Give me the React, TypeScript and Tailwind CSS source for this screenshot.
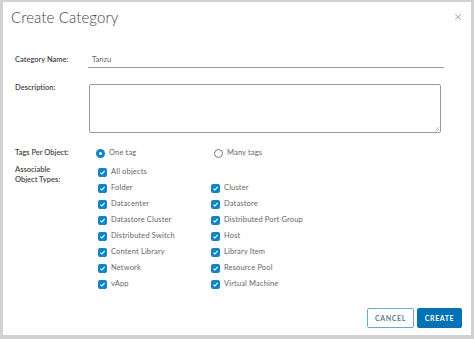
import { X } from 'lucide-react';

const leftTypes = ['Folder', 'Datacenter', 'Datastore Cluster', 'Distributed Switch', 'Content Library', 'Network', 'vApp'];
const rightTypes = ['Cluster', 'Datastore', 'Distributed Port Group', 'Host', 'Library Item', 'Resource Pool', 'Virtual Machine'];

function Check({ label }: { label: string }) {
  return (
    <div className="h-[16px] flex items-center gap-[4px]">
      <span className="w-[9px] h-[9px] rounded-[2px] bg-[#0f84c6] flex items-center justify-center">
        <svg viewBox="0 0 10 10" className="w-[7px] h-[7px]">
          <path d="M2 5.2 L4.2 7.2 L8 2.8" fill="none" stroke="white" strokeWidth="1.6" />
        </svg>
      </span>
      <span className="text-[7.5px] text-[#666] tracking-[0.15px]">{label}</span>
    </div>
  );
}

function Radio({ label, checked }: { label: string; checked?: boolean }) {
  return (
    <div className="flex items-center gap-[4px]">
      {checked ? (
        <span className="w-[9px] h-[9px] rounded-full bg-[#0f84c6] flex items-center justify-center">
          <span className="w-[3px] h-[3px] rounded-full bg-white" />
        </span>
      ) : (
        <span className="w-[9px] h-[9px] rounded-full border border-[#777] bg-white" />
      )}
      <span className="text-[7.5px] text-[#666] tracking-[0.15px]">{label}</span>
    </div>
  );
}

export default function App() {
  return (
    <div
      className="w-[474px] h-[339px] bg-[#d2d2d2] pt-[2px] pl-[3px] pr-[3px] pb-[4px]"
      style={{ fontFamily: 'Lato, "Open Sans", sans-serif' }}
    >
      <div className="h-full bg-white flex flex-col">
        {/* Header */}
        <div className="h-[30px] flex items-center justify-between pl-[8px] pr-[8px]">
          <h1 className="text-[15px] font-light text-[#444] tracking-[0.1px]">Create Category</h1>
          <X className="w-[10px] h-[10px] text-[#777]" strokeWidth={1.5} />
        </div>

        {/* Form */}
        <div className="pl-[12px] flex flex-col">
          <div className="mt-[20px] h-[16px] flex items-center">
            <span className="w-[73px] text-[7.5px] font-semibold text-[#444]">Category Name:</span>
            <div className="w-[356px] h-[16px] border-b border-[#9a9a9a] flex items-center pl-[4px]">
              <span className="text-[7.5px] text-[#666]">Tanzu</span>
            </div>
          </div>

          <div className="mt-[16px] flex">
            <span className="w-[74px] leading-[8px] text-[7.5px] font-semibold text-[#444]">Description:</span>
            <div className="w-[352px] h-[49px] border border-[#9a9a9a] rounded-[2px] relative">
              <svg viewBox="0 0 6 6" className="absolute right-[1px] bottom-[1px] w-[5px] h-[5px]">
                <path d="M1 6 L6 1 M3.5 6 L6 3.5" stroke="#999" strokeWidth="0.8" />
              </svg>
            </div>
          </div>

          <div className="mt-[14px] h-[12px] flex items-center">
            <span className="w-[81px] text-[7.5px] font-semibold text-[#444]">Tags Per Object:</span>
            <div className="w-[118px]">
              <Radio label="One tag" checked />
            </div>
            <Radio label="Many tags" />
          </div>

          <div className="mt-[5px] flex">
            <div className="w-[83px] pt-[1px] text-[7.5px] font-semibold text-[#444] leading-[10px]">
              <div>Associable</div>
              <div>Object Types:</div>
            </div>
            <div className="flex flex-col">
              <Check label="All objects" />
              <div className="flex">
                <div className="w-[113px] flex flex-col">
                  {leftTypes.map((t) => (
                    <Check key={t} label={t} />
                  ))}
                </div>
                <div className="flex flex-col">
                  {rightTypes.map((t) => (
                    <Check key={t} label={t} />
                  ))}
                </div>
              </div>
            </div>
          </div>
        </div>

        {/* Footer */}
        <div className="mt-auto mb-[7px] mr-[9px] flex justify-end gap-[3px]">
          <button className="w-[47px] h-[20px] border border-[#6aa9cc] rounded-[2px] text-[7px] font-bold tracking-[0.6px] text-[#5a7d92]">
            CANCEL
          </button>
          <button className="w-[45px] h-[20px] bg-[#0072b5] rounded-[2px] text-[7px] font-bold tracking-[0.6px] text-white">
            CREATE
          </button>
        </div>
      </div>
    </div>
  );
}
